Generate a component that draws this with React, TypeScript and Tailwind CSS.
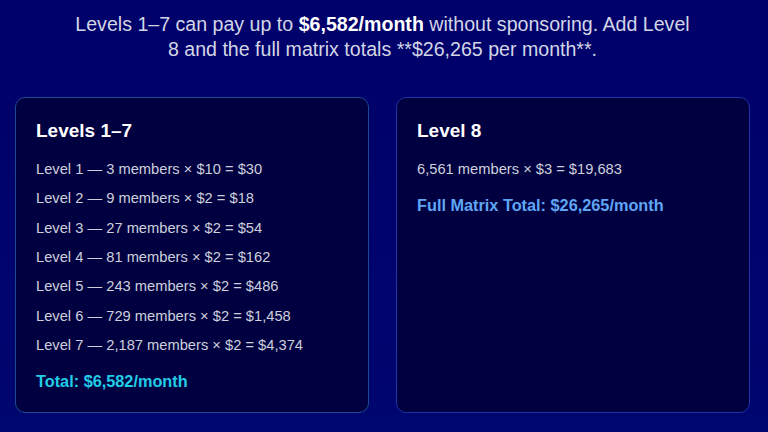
const levels = [
  'Level 1 — 3 members × $10 = $30',
  'Level 2 — 9 members × $2 = $18',
  'Level 3 — 27 members × $2 = $54',
  'Level 4 — 81 members × $2 = $162',
  'Level 5 — 243 members × $2 = $486',
  'Level 6 — 729 members × $2 = $1,458',
  'Level 7 — 2,187 members × $2 = $4,374',
]

export default function App() {
  return (
    <div
      className="flex h-[432px] w-[768px] flex-col overflow-hidden bg-gradient-to-b from-[#00006a] to-[#00066f] pb-[19px] pl-[15px] pr-[18px] pt-[12px]"
      style={{ fontFamily: '"Liberation Sans", Arial, sans-serif' }}
    >
      <p className="mx-auto max-w-[624px] text-center text-[19.6px] leading-[25px] text-[#d3d6e6]">
        Levels 1–7 can pay up to <strong className="font-bold text-white">$6,582/month</strong> without sponsoring. Add Level 8 and the full matrix totals **$26,265 per month**.
      </p>

      <div className="mt-[35px] grid flex-1 grid-cols-2 gap-[27px]">
        <div className="rounded-[10px] border border-[#1d4a8e] bg-[#000040] px-[20px] pt-[20px]">
          <h2 className="text-[19px] font-bold leading-[26px] text-white">Levels 1–7</h2>
          <div className="mt-[11px]">
            {levels.map(l => (
              <p key={l} className="text-[14.7px] leading-[29.33px] text-[#cdd0dc]">{l}</p>
            ))}
          </div>
          <p className="mt-[10px] text-[16.3px] font-bold leading-[22px] text-[#22cde8]">Total: $6,582/month</p>
        </div>

        <div className="rounded-[10px] border border-[#1f33a6] bg-[#000040] px-[20px] pt-[20px]">
          <h2 className="text-[19px] font-bold leading-[26px] text-white">Level 8</h2>
          <p className="mt-[11px] text-[14.7px] leading-[29.33px] text-[#cdd0dc]">6,561 members × $3 = $19,683</p>
          <p className="mt-[10px] text-[16.3px] font-bold leading-[22px] text-[#5fa6f5]">Full Matrix Total: $26,265/month</p>
        </div>
      </div>
    </div>
  )
}
